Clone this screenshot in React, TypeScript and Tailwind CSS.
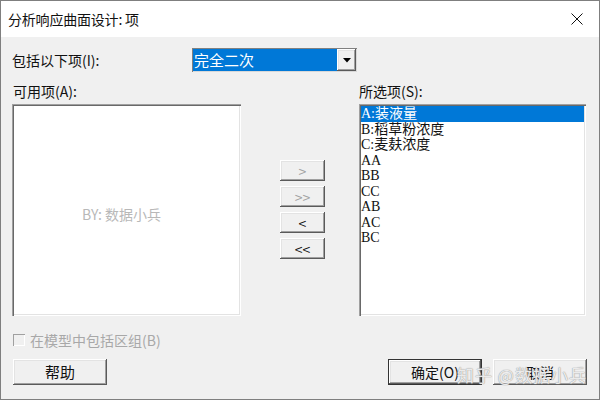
import React from 'react';

const raised =
    'bg-[#f0f0f0] shadow-[inset_-1px_-1px_0_#5a5a5a,inset_1px_1px_0_#ffffff,inset_-2px_-2px_0_#a0a0a0,inset_2px_2px_0_#e3e3e3]';
const sunken =
    'bg-white shadow-[inset_1px_1px_0_#a0a0a0,inset_2px_2px_0_#696969,inset_-1px_-1px_0_#ffffff,inset_-2px_-2px_0_#e3e3e3]';

const selectedItems = ['A:装液量', 'B:稻草粉浓度', 'C:麦麸浓度', 'AA', 'BB', 'CC', 'AB', 'AC', 'BC'];

function MoveButton({ label, disabled }: { label: string; disabled?: boolean }) {
    return (
        <div
            className={`w-[45px] h-[21px] flex items-center justify-center text-[14px] leading-none ${raised} ${
                disabled ? 'text-[#a0a0a0]' : 'text-[#111]'
            }`}
        >
            {label}
        </div>
    );
}

export default function App() {
    return (
        <div
            className="w-[600px] h-[400px] border border-[#7f7f7f] flex flex-col bg-[#f0f0f0] text-[#111] relative overflow-hidden"
            style={{ fontFamily: '"Noto Sans CJK SC", "Liberation Sans", sans-serif' }}
        >
            {/* Title bar */}
            <div className="h-[36px] bg-white flex items-center justify-between pl-[7px] pr-[15px]">
                <span className="text-[14px] tracking-[-0.2px]">分析响应曲面设计: 项</span>
                <svg width="12" height="12" viewBox="0 0 12 12" className="mr-[1px]">
                    <path d="M0.5 0.5 L11.5 11.5 M11.5 0.5 L0.5 11.5" stroke="#111" strokeWidth="1" />
                </svg>
            </div>

            <div className="flex-1 flex flex-col pl-[11px]">
                {/* Include terms */}
                <div className="mt-[11px] h-[24px] flex items-center">
                    <div className="w-[180px] text-[14px]">包括以下项(I):</div>
                    <div className="w-[165px] h-[24px] flex bg-white shadow-[inset_1px_1px_0_#808080,inset_-1px_-1px_0_#d8d8d8] p-[1px]">
                        <div className="flex-1 bg-[#0078d7] text-white text-[15px] leading-[22px] pl-[1px]">完全二次</div>
                        <div className={`w-[19px] flex items-center justify-center ${raised}`}>
                            <svg width="8" height="5" viewBox="0 0 8 5">
                                <path d="M0 0 H8 L4 4.5 Z" fill="#000" />
                            </svg>
                        </div>
                    </div>
                </div>

                {/* Column labels */}
                <div className="mt-[10px] h-[18px] flex text-[14px] leading-[18px]">
                    <div className="w-[347px] pl-[1px]">可用项(A):</div>
                    <div>所选项(S):</div>
                </div>

                {/* Lists */}
                <div className="mt-[4px] flex">
                    <div className={`w-[229px] h-[212px] flex items-center justify-center ${sunken}`}>
                        <span className="text-[14px] text-[#b8b8b8] mt-[8px] -ml-[10px]">BY: 数据小兵</span>
                    </div>
                    <div className="w-[118px] pt-[56px] pl-[39px] flex flex-col gap-[5px]">
                        <MoveButton label=">" disabled />
                        <MoveButton label=">>" disabled />
                        <MoveButton label="<" />
                        <MoveButton label="<<" />
                    </div>
                    <div className={`w-[227px] h-[212px] p-[2px] ${sunken}`}>
                        <div
                            className="flex flex-col text-[14px] leading-[15.5px]"
                            style={{ fontFamily: '"Liberation Serif", "Noto Sans CJK SC", serif' }}
                        >
                            {selectedItems.map((item, i) => (
                                <div
                                    key={item}
                                    className={`pl-[0px] h-[15.5px] ${i === 0 ? 'bg-[#0078d7] text-white' : ''}`}
                                >
                                    {item}
                                </div>
                            ))}
                        </div>
                    </div>
                </div>

                {/* Block checkbox */}
                <div className="mt-[17px] h-[14px] flex items-center gap-[5px] pl-[1px]">
                    <div className="w-[12px] h-[12px] bg-[#f0f0f0] shadow-[inset_1px_1px_0_#a0a0a0,inset_-1px_-1px_0_#ffffff]" />
                    <span className="text-[14px] text-[#a8a8a8]">在模型中包括区组(B)</span>
                </div>

                {/* Bottom buttons */}
                <div className="mt-[12px] h-[26px] flex justify-between pr-[12px]">
                    <div className={`ml-[1px] w-[94px] h-[26px] flex items-center justify-center text-[15px] ${raised}`}>
                        帮助
                    </div>
                    <div className="flex gap-[11px]">
                        <div className="w-[94px] h-[26px] border border-[#333] flex">
                            <div className={`flex-1 flex items-center justify-center text-[14px] ${raised}`}>确定(O)</div>
                        </div>
                        <div className={`w-[94px] h-[26px] flex items-center justify-center text-[14px] ${raised}`}>
                            取消
                        </div>
                    </div>
                </div>
            </div>

            {/* Watermark overlay */}
            <div className="absolute left-[456px] top-[361px] text-[17px] text-white/80 [text-shadow:0_0_1px_#9a9a9a,0_0_1px_#9a9a9a] tracking-[1px] pointer-events-none">
                知乎 @数据小兵
            </div>
        </div>
    );
}
